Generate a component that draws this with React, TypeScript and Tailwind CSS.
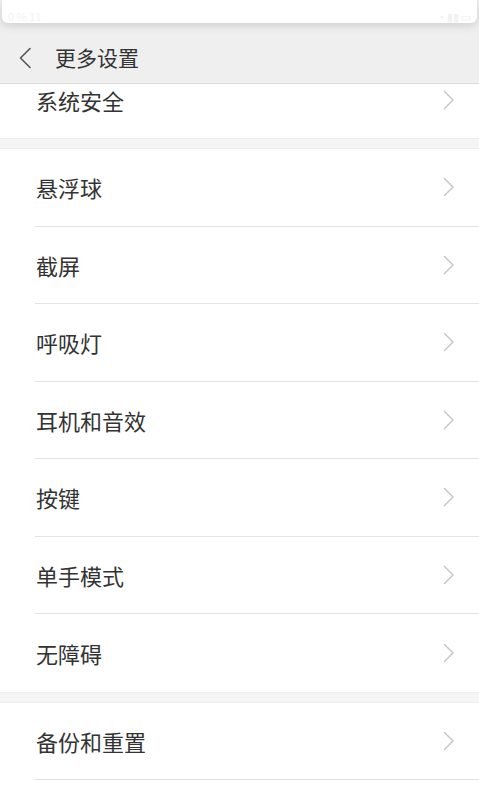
const font = { fontFamily: '"Noto Sans CJK SC", "Noto Sans", sans-serif' };

function Arrow() {
  return (
    <svg width="14" height="20" viewBox="0 0 14 20" fill="none" className="shrink-0">
      <path d="M2.5 1.5 L11 10 L2.5 18.5" stroke="#c4c4c4" strokeWidth="1.4" strokeLinecap="round" strokeLinejoin="round" />
    </svg>
  );
}

function BackIcon() {
  return (
    <svg width="14" height="22" viewBox="0 0 14 22" fill="none" className="shrink-0">
      <path d="M12 1.5 L2.5 11 L12 20.5" stroke="#555555" strokeWidth="1.6" strokeLinecap="round" strokeLinejoin="round" />
    </svg>
  );
}

function Row({ label, divider = true }: { label: string; divider?: boolean }) {
  return (
    <div className="h-[77.5px] pl-[35px] bg-white">
      <div className={`h-full flex items-center justify-between pr-[23px] ${divider ? "border-b border-[#e3e3e3]" : ""}`}>
        <span className="text-[22px] leading-none text-[#333333] pl-[1px]">{label}</span>
        <Arrow />
      </div>
    </div>
  );
}

function Gap() {
  return <div className="h-[11px] bg-[#f5f5f5] border-y border-[#eeeeee]" />;
}

export default function App() {
  const mainItems = ["悬浮球", "截屏", "呼吸灯", "耳机和音效", "按键", "单手模式", "无障碍"];

  return (
    <div className="w-[479px] h-[793px] overflow-hidden bg-[#f5f5f5]" style={font}>
      {/* notification card over the status bar */}
      <div className="bg-[#efefef] px-[2px]">
        <div className="relative z-10 h-[23px] bg-white rounded-b-[6px] shadow-[0_3px_8px_rgba(0,0,0,0.13)] flex items-end justify-between px-[6px] pb-[1px]">
          <span className="text-[11px] leading-none text-[#f2f2f2]">0 % 11</span>
          <span className="text-[11px] leading-none text-[#f2f2f2]">◔ ▮▮ ▭</span>
        </div>
      </div>

      {/* header */}
      <div className="h-[61px] bg-[#efefef] border-b border-[#dadada] flex items-center pt-[9px]">
        <div className="ml-[18px]">
          <BackIcon />
        </div>
        <span className="ml-[23px] text-[21px] leading-none text-[#333333]">更多设置</span>
      </div>

      {/* scrolled section */}
      <div className="h-[54px] overflow-hidden bg-white">
        <div className="-mt-[23px]">
          <Row label="系统安全" divider={false} />
        </div>
      </div>

      <Gap />

      <div>
        {mainItems.map((item, i) => (
          <Row key={item} label={item} divider={i < mainItems.length - 1} />
        ))}
      </div>

      <Gap />

      <div>
        <Row label="备份和重置" />
        <div className="h-[40px] bg-white" />
      </div>
    </div>
  );
}
